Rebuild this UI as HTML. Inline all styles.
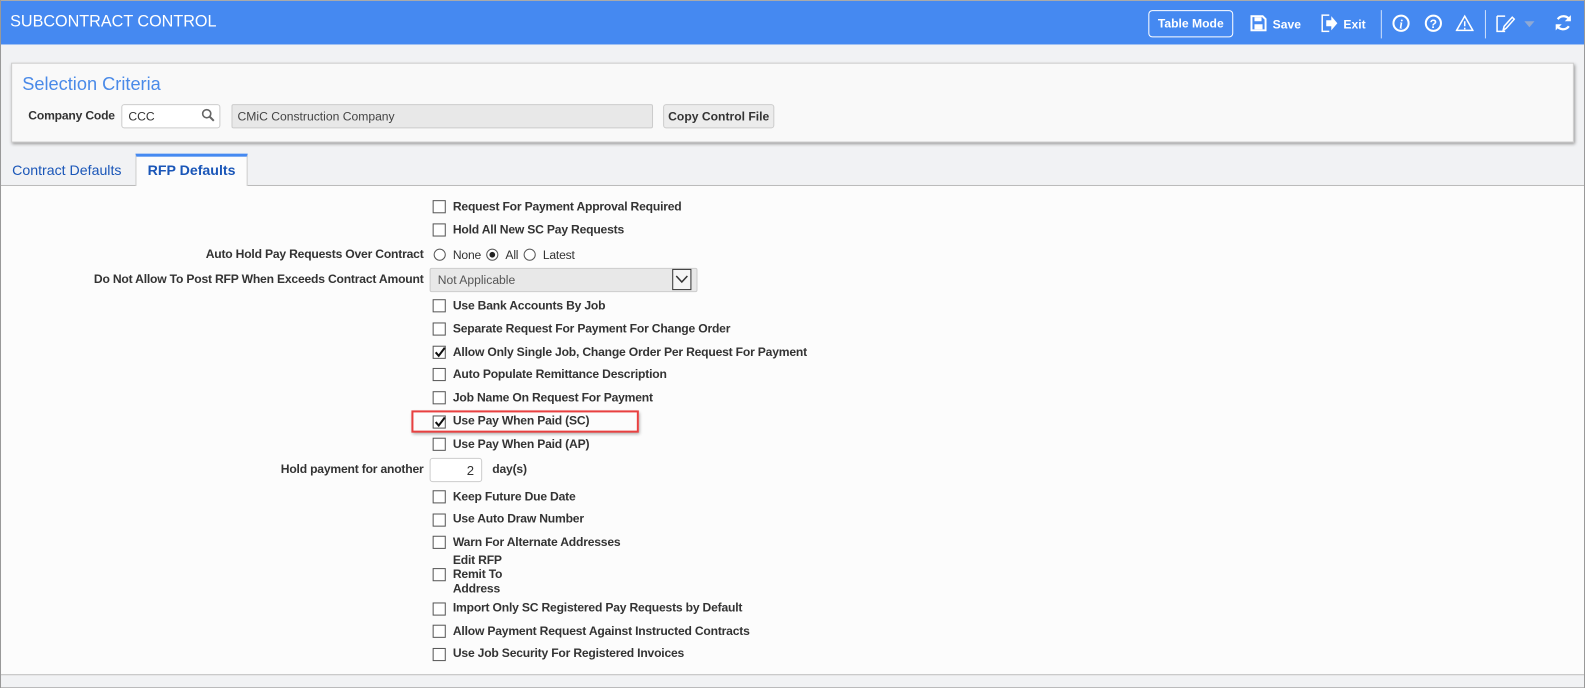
<!DOCTYPE html>
<html><head><meta charset="utf-8"><style>
*{box-sizing:border-box;margin:0;padding:0}
body{width:1585px;height:688px;overflow:hidden;background:#f1f2f4;font-family:"Liberation Sans",Arial,sans-serif;font-size:12px;color:#333;position:relative}
#w{position:absolute;left:0;top:0;width:1568px;height:681px;transform:scale(1.01085);transform-origin:0 0}
.frame{position:absolute;left:0;top:0;width:1568px;height:681px;border:1px solid #999;border-top:none}
.top{position:absolute;left:0;top:0;width:1568px;height:44px;background:#4589f1;border-top:1px solid #aaa}
.title{position:absolute;left:10px;top:12px;color:#fff;font-size:16px}
.tb{position:absolute;color:#fff;font-weight:bold;font-size:12px}
.abs{position:absolute}
.lbl{position:absolute;font-weight:bold;white-space:nowrap;letter-spacing:-0.2px}
.cb{position:absolute;width:13px;height:13px;border:1px solid #555;background:#fff}
.rl{text-align:right}
</style></head><body><div id="w">
<div class="top">
<div class="title">SUBCONTRACT CONTROL</div>
<div class="abs" style="left:1136px;top:9px;width:84px;height:27px;border:1px solid #fff;border-radius:4px;color:#fff;font-weight:bold;text-align:center;line-height:25px">Table Mode</div>
<svg class="abs" style="left:1237px;top:14px" width="16" height="16" viewBox="0 0 16 16"><path d="M1 1h11l3 3v11H1z" fill="none" stroke="#fff" stroke-width="2"/><rect x="4" y="2" width="7" height="4" fill="#fff"/><rect x="4" y="9" width="8" height="5" fill="#fff"/></svg>
<div class="tb" style="left:1259px;top:16px">Save</div>
<svg class="abs" style="left:1307px;top:13px" width="17" height="18" viewBox="0 0 17 18"><path d="M8 1H1v16h7" fill="none" stroke="#fff" stroke-width="1.5"/><path d="M5 6h5V2l6 7-6 7v-4H5z" fill="#fff"/></svg>
<div class="tb" style="left:1329px;top:16px">Exit</div>
<div class="abs" style="left:1366px;top:9px;width:1px;height:28px;background:#cfe0fb"></div>
<svg class="abs" style="left:1377px;top:13px" width="18" height="18"><circle cx="9" cy="9" r="7.5" fill="none" stroke="#fff" stroke-width="2"/><text x="9" y="14" fill="#fff" font-size="12" font-weight="bold" font-style="italic" text-anchor="middle" font-family="Liberation Serif">i</text></svg>
<svg class="abs" style="left:1409px;top:13px" width="18" height="18"><circle cx="9" cy="9" r="7.5" fill="none" stroke="#fff" stroke-width="2"/><text x="9" y="13.5" fill="#fff" font-size="12" font-weight="bold" text-anchor="middle" font-family="Liberation Sans">?</text></svg>
<svg class="abs" style="left:1440px;top:13px" width="18" height="18"><path d="M9 2L17 16H1z" fill="none" stroke="#fff" stroke-width="1.5"/><path d="M9 7v5M9 13.5v1.5" stroke="#fff" stroke-width="1.5"/></svg>
<div class="abs" style="left:1469px;top:9px;width:1px;height:28px;background:#cfe0fb"></div>
<svg class="abs" style="left:1479px;top:12px" width="20" height="20"><path d="M2 3h8M2 3v15h8" fill="none" stroke="#fff" stroke-width="1.5"/><path d="M8 17l1-4 8-9 2 2-8 9z" fill="none" stroke="#fff" stroke-width="1.5"/></svg>
<div class="abs" style="left:1508px;top:20px;width:0;height:0;border-left:5px solid transparent;border-right:5px solid transparent;border-top:6px solid #8fa9d4"></div>
<svg class="abs" style="left:1537px;top:12px" width="19" height="19" viewBox="0 0 19 19"><path d="M4 6a7 7 0 0 1 12 1M15 13a7 7 0 0 1-12-1" fill="none" stroke="#fff" stroke-width="2.2"/><path d="M17 2v6h-6z M2 17v-6h6z" fill="#fff"/></svg>
</div>

<div class="abs" style="left:11px;top:62px;width:1546px;height:79px;background:#f9f9f9;border:1px solid #ccc;box-shadow:1px 2px 3px #999"></div>
<div class="abs" style="left:22px;top:73px;color:#4a8ae8;font-size:18px">Selection Criteria</div>
<div class="lbl" style="left:28px;top:107px">Company Code</div>
<div class="abs" style="left:120px;top:103px;width:98px;height:24px;border:1px solid #ccc;border-radius:3px;background:#fff;padding:4px 6px">CCC</div>
<svg class="abs" style="left:199px;top:107px" width="14" height="14"><circle cx="5.5" cy="5.5" r="4" fill="none" stroke="#666" stroke-width="1.6"/><path d="M8.5 8.5l4 4" stroke="#666" stroke-width="2"/></svg>
<div class="abs" style="left:229px;top:103px;width:417px;height:24px;border:1px solid #ccc;border-radius:2px;background:#e8e8e8;padding:4px 5px;color:#444">CMiC Construction Company</div>
<div class="abs" style="left:656px;top:103px;width:110px;height:24px;border:1px solid #ccc;border-radius:3px;background:#ececec;font-weight:bold;text-align:center;line-height:22px">Copy Control File</div>

<div class="abs" style="left:12px;top:160px;color:#1a56b8;font-size:14px">Contract Defaults</div>
<div class="abs" style="left:134px;top:152px;width:111px;height:32px;background:#fcfcfc;border:1px solid #ccc;border-top:3px solid #4589f1;border-bottom:none;color:#1a56b8;font-weight:bold;font-size:14px;text-align:center;line-height:27px;z-index:2">RFP Defaults</div>
<div class="abs" style="left:0;top:183px;width:1568px;height:485px;background:#fcfcfc;border-top:1px solid #bbb;border-bottom:1px solid #bbb"></div>

<div class="cb" style="left:428px;top:198px"></div><div class="lbl" style="left:448px;top:197px">Request For Payment Approval Required</div>
<div class="cb" style="left:428px;top:221px"></div><div class="lbl" style="left:448px;top:220px">Hold All New SC Pay Requests</div>
<div class="lbl rl" style="right:1149px;top:244px">Auto Hold Pay Requests Over Contract</div>
<svg class="abs" style="left:428px;top:245px" width="160" height="14"><circle cx="7" cy="7" r="5.5" fill="#fff" stroke="#555"/><circle cx="59" cy="7" r="5.5" fill="#fff" stroke="#555"/><circle cx="59" cy="7" r="2.8" fill="#222"/><circle cx="96" cy="7" r="5.5" fill="#fff" stroke="#555"/></svg>
<div class="lbl" style="left:448px;top:245px;font-weight:normal">None</div>
<div class="lbl" style="left:500px;top:245px;font-weight:normal">All</div>
<div class="lbl" style="left:537px;top:245px;font-weight:normal">Latest</div>
<div class="lbl rl" style="right:1149px;top:269px">Do Not Allow To Post RFP When Exceeds Contract Amount</div>
<div class="abs" style="left:425px;top:265px;width:265px;height:24px;border:1px solid #ccc;border-radius:2px;background:#e8e8e8;padding:4px 7px;color:#555">Not Applicable</div>
<div class="abs" style="left:665px;top:266px;width:19px;height:21px;border:1px solid #333;background:#f5f5f5"></div>
<svg class="abs" style="left:668px;top:271px" width="13" height="10"><path d="M1 2l5.5 6L12 2" fill="none" stroke="#333" stroke-width="1.5"/></svg>

<div class="cb" style="left:428px;top:296px"></div><div class="lbl" style="left:448px;top:295px">Use Bank Accounts By Job</div>
<div class="cb" style="left:428px;top:319px"></div><div class="lbl" style="left:448px;top:318px">Separate Request For Payment For Change Order</div>
<div class="cb" style="left:428px;top:342px"></div><div class="lbl" style="left:448px;top:341px">Allow Only Single Job, Change Order Per Request For Payment</div>
<div class="cb" style="left:428px;top:364px"></div><div class="lbl" style="left:448px;top:363px">Auto Populate Remittance Description</div>
<div class="cb" style="left:428px;top:387px"></div><div class="lbl" style="left:448px;top:386px">Job Name On Request For Payment</div>
<div class="cb" style="left:428px;top:411px"></div><div class="lbl" style="left:448px;top:409px">Use Pay When Paid (SC)</div>
<div class="abs" style="left:407px;top:406px;width:225px;height:22px;border:2px solid #e84040;box-shadow:1px 2px 3px #aaa"></div>
<div class="cb" style="left:428px;top:433px"></div><div class="lbl" style="left:448px;top:432px">Use Pay When Paid (AP)</div>
<div class="lbl rl" style="right:1149px;top:457px">Hold payment for another</div>
<div class="abs" style="left:425px;top:453px;width:52px;height:24px;border:1px solid #ccc;border-radius:3px;background:#fff;text-align:right;padding:4px 7px;font-size:13px">2</div>
<div class="lbl" style="left:487px;top:457px">day(s)</div>
<div class="cb" style="left:428px;top:485px"></div><div class="lbl" style="left:448px;top:484px">Keep Future Due Date</div>
<div class="cb" style="left:428px;top:508px"></div><div class="lbl" style="left:448px;top:506px">Use Auto Draw Number</div>
<div class="cb" style="left:428px;top:530px"></div><div class="lbl" style="left:448px;top:529px">Warn For Alternate Addresses</div>
<div class="cb" style="left:428px;top:562px"></div><div class="lbl" style="left:448px;top:547px;line-height:14px;white-space:normal">Edit RFP<br>Remit To<br>Address</div>
<div class="cb" style="left:428px;top:596px"></div><div class="lbl" style="left:448px;top:594px">Import Only SC Registered Pay Requests by Default</div>
<div class="cb" style="left:428px;top:618px"></div><div class="lbl" style="left:448px;top:617px">Allow Payment Request Against Instructed Contracts</div>
<div class="cb" style="left:428px;top:641px"></div><div class="lbl" style="left:448px;top:639px">Use Job Security For Registered Invoices</div>

<svg class="abs" style="left:429px;top:342px" width="13" height="13"><path d="M2 6.5l3 3.5 6-8" fill="none" stroke="#111" stroke-width="2"/></svg>
<svg class="abs" style="left:429px;top:411px" width="13" height="13"><path d="M2 6.5l3 3.5 6-8" fill="none" stroke="#111" stroke-width="2"/></svg>
<div class="frame"></div>
</div></body></html>
